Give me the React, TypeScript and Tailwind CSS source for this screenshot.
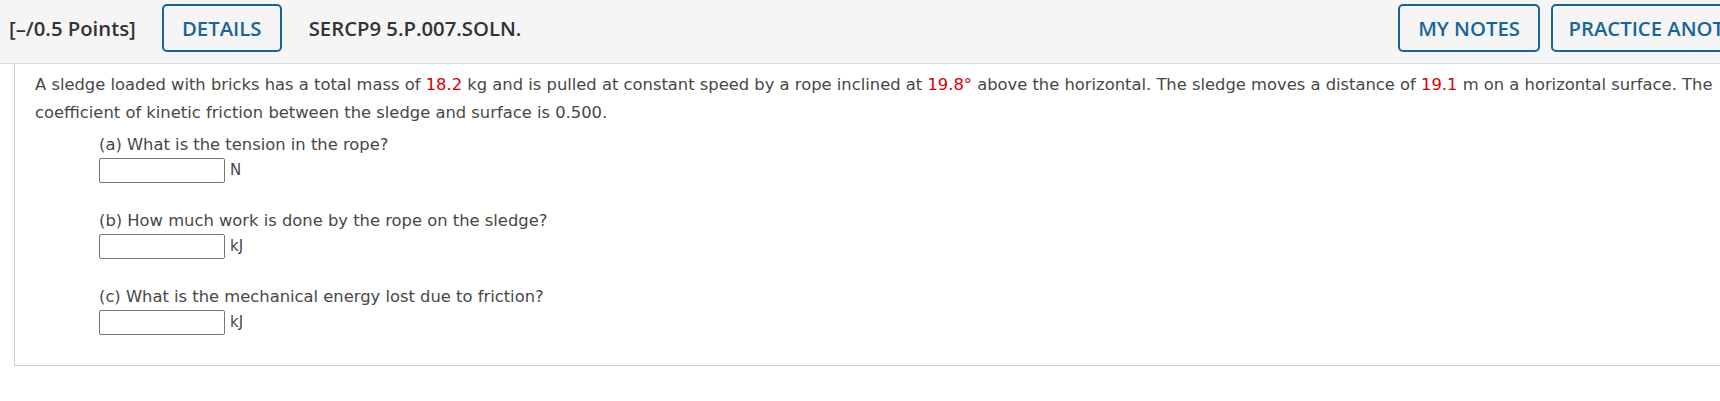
const red = 'text-[#d40000]'

function Answer({ label, unit }: { label: string; unit: string }) {
  return (
    <div className="mb-[26px]">
      <p className="leading-[24px]">{label}</p>
      <div className="flex items-center gap-[5px] mt-[1px]">
        <input
          type="text"
          className="w-[126px] h-[25px] border border-[#767676] rounded-[2px] bg-white"
        />
        <span className="text-[15px]">{unit}</span>
      </div>
    </div>
  )
}

export default function App() {
  return (
    <div className="w-[1720px] h-[401px] bg-white overflow-hidden">
      <div className="h-[64px] bg-[#f5f5f5] border-b border-[#dcdcdc] overflow-hidden">
        <div
          className="w-[1781px] h-[56px] flex items-center pl-[9px] text-[20.3px] font-semibold"
          style={{ fontFamily: '"Open Sans", sans-serif' }}
        >
          <span className="text-[#333] whitespace-nowrap">[–/0.5 Points]</span>
          <button className="ml-[26px] w-[120px] h-[48px] border-2 border-[#1a6598] rounded-[5px] text-[#1a6598] shrink-0">
            DETAILS
          </button>
          <span className="ml-[27px] text-[#333] whitespace-nowrap">SERCP9 5.P.007.SOLN.</span>
          <button className="ml-auto w-[142px] h-[48px] border-2 border-[#1a6598] rounded-[5px] text-[#1a6598] shrink-0">
            MY NOTES
          </button>
          <button className="ml-[11px] w-[230px] h-[48px] border-2 border-[#1a6598] rounded-[5px] text-[#1a6598] shrink-0 whitespace-nowrap">
            PRACTICE ANOTHER
          </button>
        </div>
      </div>
      <div
        className="ml-[14px] w-[1800px] h-[302px] border-l border-b border-[#cccccc] pl-[20px] pt-[7px] text-[#474747] text-[16.35px]"
        style={{ fontFamily: 'Verdana, "DejaVu Sans", sans-serif' }}
      >
        <p className="leading-[28px] w-[1684px]">
          A sledge loaded with bricks has a total mass of <span className={red}>18.2</span> kg and is
          pulled at constant speed by a rope inclined at <span className={red}>19.8°</span> above the
          horizontal. The sledge moves a distance of <span className={red}>19.1</span> m on a horizontal
          surface. The coefficient of kinetic friction between the sledge and surface is 0.500.
        </p>
        <div className="ml-[64px] mt-[6px]">
          <Answer label="(a) What is the tension in the rope?" unit="N" />
          <Answer label="(b) How much work is done by the rope on the sledge?" unit="kJ" />
          <Answer label="(c) What is the mechanical energy lost due to friction?" unit="kJ" />
        </div>
      </div>
    </div>
  )
}
